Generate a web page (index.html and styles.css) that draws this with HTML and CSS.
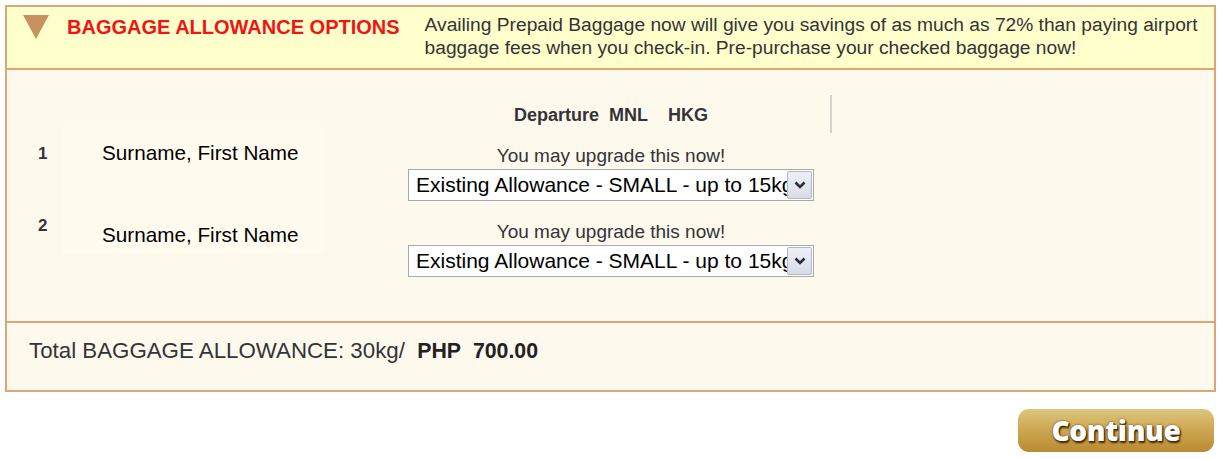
FILE: index.html
```html
<!DOCTYPE html>
<html>
<head>
<meta charset="utf-8">
<title>Baggage Allowance Options</title>
<link rel="stylesheet" href="styles.css">
</head>
<body>
<div class="box">
  <div class="head">
    <svg class="tri" width="26" height="24" viewBox="0 0 26 24"><polygon points="0,0 26,0 13,24" fill="#c4915f"/></svg>
    <div class="title">BAGGAGE ALLOWANCE OPTIONS</div>
    <div class="desc">Availing Prepaid Baggage now will give you savings of as much as 72% than paying airport<br>baggage fees when you check-in. Pre-purchase your checked baggage now!</div>
  </div>
  <div class="main">
    <div class="col-num">
      <div class="num n1">1</div>
      <div class="num n2">2</div>
    </div>
    <div class="col-name">
      <div class="name nm1">Surname, First Name</div>
      <div class="name nm2">Surname, First Name</div>
    </div>
    <div class="col-sel">
      <div class="dep">Departure&nbsp; MNL&nbsp;&nbsp;&nbsp; HKG</div>
      <div class="up u1">You may upgrade this now!</div>
      <div class="sel">
        <span class="sel-text">Existing Allowance - SMALL - up to 15kg</span>
        <span class="sel-btn"><svg width="12" height="8" viewBox="0 0 12 8"><polyline points="1.5,1.5 6,6 10.5,1.5" fill="none" stroke="#2b2b3d" stroke-width="2.6"/></svg></span>
      </div>
      <div class="up u2">You may upgrade this now!</div>
      <div class="sel">
        <span class="sel-text">Existing Allowance - SMALL - up to 15kg</span>
        <span class="sel-btn"><svg width="12" height="8" viewBox="0 0 12 8"><polyline points="1.5,1.5 6,6 10.5,1.5" fill="none" stroke="#2b2b3d" stroke-width="2.6"/></svg></span>
      </div>
    </div>
    <div class="sep"></div>
  </div>
  <div class="foot">Total BAGGAGE ALLOWANCE: 30kg/&nbsp; <b>PHP&nbsp; 700.00</b></div>
</div>
<div class="actions">
  <button class="continue" type="button">Continue</button>
</div>
</body>
</html>
```
FILE: styles.css
```css
html, body {
  margin: 0;
  padding: 0;
  background: #ffffff;
}
body {
  font-family: "Liberation Sans", Arial, sans-serif;
  width: 1224px;
}
.box {
  margin: 5px 0 0 5px;
  width: 1211px;
  border: 2px solid #dda775;
  box-sizing: border-box;
}
.head {
  height: 61px;
  background: #ffffcc;
  border-bottom: 2px solid #dda775;
  display: flex;
  align-items: flex-start;
}
.tri {
  display: block;
  margin: 8px 0 0 16px;
  flex: none;
}
.title {
  margin: 8px 0 0 18px;
  font-size: 20px;
  line-height: 24px;
  font-weight: bold;
  color: #f01414;
  white-space: nowrap;
  flex: none;
}
.desc {
  margin: 6px 0 0 25px;
  font-size: 19.2px;
  line-height: 23px;
  color: #333338;
  white-space: nowrap;
}
.main {
  height: 251px;
  background: #fef9ed;
  border-bottom: 2px solid #dda775;
  display: flex;
  align-items: flex-start;
}
.col-num {
  width: 55px;
  flex: none;
  padding-left: 31px;
  box-sizing: border-box;
}
.num {
  font-size: 17px;
  line-height: 20px;
  font-weight: bold;
  color: #333338;
}
.n1 { margin-top: 74px; }
.n2 { margin-top: 52px; }
.col-name {
  width: 263px;
  height: 127px;
  margin-top: 57px;
  flex: none;
  background: #fffcef;
  padding-left: 40px;
  box-sizing: border-box;
}
.name {
  font-size: 20.7px;
  line-height: 24px;
  color: #000;
  white-space: nowrap;
}
.nm1 { padding-top: 14px; }
.nm2 { margin-top: 58px; }
.col-sel {
  width: 406px;
  margin-left: 83px;
  flex: none;
  text-align: center;
}
.dep {
  margin-top: 33px;
  font-size: 18px;
  line-height: 24px;
  font-weight: bold;
  color: #333338;
}
.up {
  font-size: 19px;
  line-height: 22px;
  color: #333338;
}
.u1 { margin-top: 18px; }
.u2 { margin-top: 20px; }
.sel {
  margin-top: 2px;
  height: 32px;
  border: 1px solid #a5a9b0;
  background: #fff;
  box-sizing: border-box;
  display: flex;
  align-items: center;
  text-align: left;
  overflow: hidden;
}
.sel-text {
  flex: 1;
  min-width: 0;
  overflow: hidden;
  white-space: nowrap;
  font-size: 21px;
  line-height: 28px;
  color: #000;
  padding-left: 7px;
}
.sel-btn {
  flex: none;
  width: 25px;
  height: 28px;
  margin-right: 1px;
  border: 1px solid #b3b8c8;
  border-radius: 2px;
  background: linear-gradient(#eef0f6, #d9dce6);
  box-sizing: border-box;
  display: flex;
  align-items: center;
  justify-content: center;
}
.sel-btn svg { display: block; }
.sep {
  width: 2px;
  height: 38px;
  margin: 25px 0 0 16px;
  background: #d4d2cc;
  flex: none;
}
.foot {
  height: 67px;
  background: #fef9ed;
  padding: 15px 0 0 22px;
  box-sizing: border-box;
  font-size: 22.3px;
  line-height: 26px;
  color: #333338;
  white-space: nowrap;
}
.foot b {
  font-size: 21.3px;
  color: #222;
}
.actions {
  width: 1214px;
  display: flex;
  justify-content: flex-end;
  margin-top: 17px;
}
.continue {
  width: 196px;
  height: 43px;
  border: none;
  border-radius: 11px;
  background: linear-gradient(#dcc67e 0%, #cfa954 45%, #b98a31 100%);
  font-family: "Open Sans", "DejaVu Sans", sans-serif;
  font-weight: 800;
  font-size: 28px;
  line-height: 43px;
  padding: 0;
  color: #ffffff;
  text-shadow: 0 0 2px #5a3a0c, 1px 1px 1px #4a2e08, 1px 2px 2px #3c2406;
  letter-spacing: -0.3px;
}
```
